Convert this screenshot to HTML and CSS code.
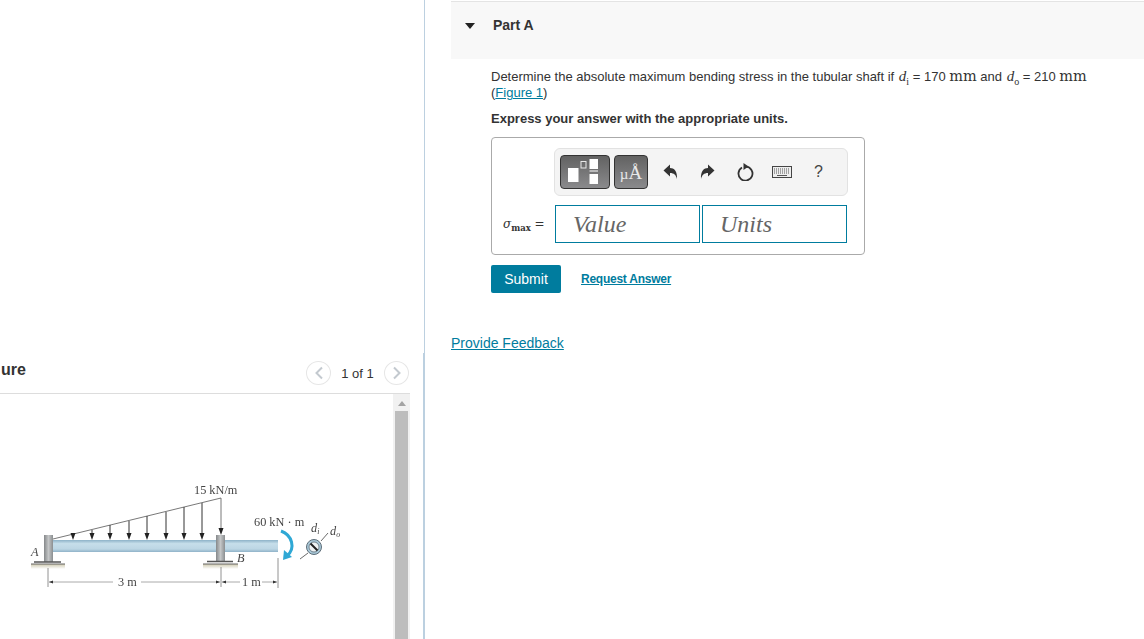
FILE: index.html
```html
<!DOCTYPE html>
<html>
<head>
    <meta charset="UTF-8">
    <title>Part A</title>
    <link rel="stylesheet" href="styles.css">
</head>
<body>
<div class="page">
    <div class="izquierda">
        <div class="panelFigura">
            <div class="cabeceraFigura">
                <span class="tituloFigura">ure</span>
                <div class="paginador">
                    <span class="flecha">
                        <svg width="10" height="14" viewBox="0 0 10 14"><path d="M8 1.5 2.5 7 8 12.5" fill="none" stroke="#c3c9cf" stroke-width="2"/></svg>
                    </span>
                    <span class="cuenta">1 of 1</span>
                    <span class="flecha">
                        <svg width="10" height="14" viewBox="0 0 10 14"><path d="M2 1.5 7.5 7 2 12.5" fill="none" stroke="#c3c9cf" stroke-width="2"/></svg>
                    </span>
                </div>
            </div>
            <div class="cuerpoFigura">
                <!-- viewBox uses the y of the page so the drawing can be read against the screenshot -->
                <svg class="figura" width="393" height="245" viewBox="0 394 393 245">
                    <defs>
                        <linearGradient id="barra" x1="0" y1="0" x2="0" y2="1">
                            <stop offset="0" stop-color="#8db2c8"/>
                            <stop offset="0.3" stop-color="#c6deea"/>
                            <stop offset="0.75" stop-color="#bcd6e4"/>
                            <stop offset="1" stop-color="#8fb2c8"/>
                        </linearGradient>
                        <linearGradient id="apoyo" x1="0" y1="0" x2="1" y2="0">
                            <stop offset="0" stop-color="#85888a"/>
                            <stop offset="0.5" stop-color="#c4c6c7"/>
                            <stop offset="1" stop-color="#8b8e90"/>
                        </linearGradient>
                        <linearGradient id="suelo" x1="0" y1="0" x2="0" y2="1">
                            <stop offset="0" stop-color="#cdc8ae"/>
                            <stop offset="1" stop-color="#ffffff"/>
                        </linearGradient>
                    </defs>

                    <rect x="31" y="564" width="34" height="5" fill="url(#suelo)"/>
                    <rect x="203" y="564" width="35" height="5" fill="url(#suelo)"/>
                    <rect x="52" y="540" width="226" height="12" fill="url(#barra)"/>

                    <rect x="44" y="535" width="9" height="27" fill="url(#apoyo)"/>
                    <rect x="216" y="535" width="9" height="26" fill="url(#apoyo)"/>
                    <path d="M34 562H61M207 561.5H233" stroke="#555" stroke-width="1.5"/>
                    <path d="M31 564H65M203 564H238" stroke="#666" stroke-width="1"/>

                    <path d="M53 539 221 498V530" fill="none" stroke="#555" stroke-width="0.8"/>
                    <path class="lineaCarga" d="M92 530V535M110 525V535M129 521V535M147 516V535M166 512V535M184 507V535M202 503V535"/>
                    <path fill="#222" d="M70.5 533h5l-2.500 7zM89.5 533h5l-2.500 7zM107.5 533h5l-2.500 7zM126.5 533h5l-2.500 7zM144.5 533h5l-2.500 7zM163.5 533h5l-2.500 7zM181.5 533h5l-2.500 7zM199.5 533h5l-2.500 7zM218.5 528h5l-2.500 7z"/>

                    <path class="cota" d="M48 568V587M221 567V587M278 558V588"/>
                    <path class="cotaLinea" d="M49 582H113M141 582H220M222 582H240M262 582H277"/>
                    <path fill="#333" d="M49 582l4-1.500v3zM220 582l-4-1.500v3zM222 582l4-1.500v3zM277 582l-4-1.500v3z"/>

                    <path d="M281 531C292 535 296 548 287 556" fill="none" stroke="#2fa8d5" stroke-width="3"/>
                    <path d="M283 560 284 550 292 557z" fill="#2fa8d5"/>

                    <circle cx="314" cy="547" r="7.5" fill="#a9c8d8" stroke="#5d6d78" stroke-width="1"/>
                    <circle cx="314" cy="547" r="5" fill="#eef2f4" stroke="#5d6d78" stroke-width="0.8"/>
                    <path d="M310.5 543.5 317.5 550.5" stroke="#222" stroke-width="2"/>
                    <path d="M300 559 308 553M321 541 328 533" stroke="#444" stroke-width="0.8"/>

                    <text class="tx" x="194" y="494">15 kN/m</text>
                    <text class="tx" x="254" y="526">60 kN · m</text>
                    <text class="tx" x="118" y="586">3 m</text>
                    <text class="tx" x="242" y="586">1 m</text>
                    <text class="tx cursiva" x="31" y="556">A</text>
                    <text class="tx cursiva" x="237" y="562">B</text>
                    <text class="tx cursiva" x="311" y="532">d<tspan class="sub" dy="2">i</tspan></text>
                    <text class="tx cursiva" x="330" y="535">d<tspan class="sub" dy="2">o</tspan></text>
                </svg>
                <div class="barraScroll">
                    <span class="scrollArriba"></span>
                    <span class="scrollPulgar"></span>
                </div>
            </div>
        </div>
    </div>

    <div class="derecha">
        <div class="parte">
            <span class="triangulo"></span>
            <span class="tituloParte">Part A</span>
        </div>
        <div class="contenido">
            <p class="enunciado">Determine the absolute maximum bending stress in the tubular shaft if <i class="letra">d</i><sub class="indice">i</sub> = 170 <span class="unidad">mm</span> and <i class="letra">d</i><sub class="indice">o</sub> = 210 <span class="unidad">mm</span><br>(<a href="#">Figure 1</a>)</p>
            <p class="instruccion">Express your answer with the appropriate units.</p>
            <div class="caja">
                <div class="herramientas">
                    <span class="botonOscuro botonPlantilla">
                        <svg width="48" height="32" viewBox="0 0 48 32">
                            <rect x="7" y="12" width="10.5" height="14" fill="#fff"/>
                            <rect x="20" y="5.5" width="5" height="6.5" fill="none" stroke="#e8e8e8" stroke-width="1"/>
                            <rect x="28.5" y="3" width="8.5" height="10" fill="#fff"/>
                            <rect x="28.5" y="14.5" width="8.5" height="1" fill="#fff"/>
                            <rect x="28.5" y="18" width="8.5" height="10" fill="#fff"/>
                        </svg>
                    </span>
                    <span class="botonOscuro botonUnidades"><span class="micro">µ</span>Å</span>
                    <span class="hueco">
                        <svg width="15" height="16" viewBox="0 0 15 16"><path d="M0.5 6.5 7 0.5V4C11 4 14.5 7 14 15 13 11 11 9 7 9V12.5z" fill="#333"/></svg>
                    </span>
                    <span class="hueco">
                        <svg width="15" height="16" viewBox="0 0 15 16"><path d="M14.5 6.5 8 0.5V4C4 4 0.5 7 1 15 2 11 4 9 8 9V12.5z" fill="#333"/></svg>
                    </span>
                    <span class="hueco">
                        <svg width="18" height="18" viewBox="0 0 18 18"><path d="M6 4.5A7 7 0 1 0 10 3.6" fill="none" stroke="#333" stroke-width="1.8"/><path d="M7.5 0 12.5 3.500 7.500 7z" fill="#333"/></svg>
                    </span>
                    <span class="hueco">
                        <svg width="20" height="12" viewBox="0 0 20 12">
                            <rect x="0.5" y="0.5" width="19" height="11" fill="#eee" stroke="#444"/>
                            <path d="M2 3H18M2 5H18M2 7H18" stroke="#555" stroke-dasharray="1 1"/>
                            <path d="M5 9.5H15" stroke="#555"/>
                        </svg>
                    </span>
                    <span class="hueco ayuda">?</span>
                </div>
                <div class="filaRespuesta">
                    <span class="sigma"><i>σ</i><sub>max</sub> =</span>
                    <span class="entrada">Value</span>
                    <span class="entrada">Units</span>
                </div>
            </div>
            <div class="acciones">
                <button class="enviar" type="button">Submit</button>
                <a class="pedir" href="#">Request Answer</a>
            </div>
        </div>
        <a class="opinion" href="#">Provide Feedback</a>
    </div>
</div>
</body>
</html>
```

FILE: styles.css
```css
html, body {
    margin: 0;
    height: 100%;
    overflow: hidden;
}

body {
    background-color: white;
    color: #333;
    font-family: "Liberation Sans", Arial, sans-serif;
    font-size: 13px;
}

a {
    color: #007c9e;
}

.page {
    display: flex;
    height: 639px;
}

.izquierda {
    width: 424px;
    flex-shrink: 0;
}

.panelFigura {
    margin-top: 353px;
    height: 286px;
    box-sizing: border-box;
    padding-top: 8px;
    border-right: 1px solid #bcd0e0;
}

.cabeceraFigura {
    width: 410px;
    height: 33px;
    box-sizing: border-box;
    border-bottom: 1px solid #ddd;
    display: flex;
    justify-content: space-between;
    align-items: flex-start;
}

.tituloFigura {
    font-size: 16px;
    font-weight: bold;
    line-height: 18px;
    margin-left: 1px;
}

.paginador {
    display: flex;
    gap: 10px;
    padding-right: 1px;
}

.flecha {
    width: 25px;
    height: 24px;
    box-sizing: border-box;
    border: 1px solid #e6e6e6;
    border-radius: 50%;
    display: flex;
    align-items: center;
    justify-content: center;
}

.cuenta {
    font-size: 13px;
    line-height: 26px;
    width: 33px;
    text-align: center;
    white-space: nowrap;
}

.cuerpoFigura {
    display: flex;
    width: 410px;
}

.figura {
    display: block;
    filter: blur(0.3px);
}

.barraScroll {
    width: 17px;
    background-color: #f1f1f1;
    height: 245px;
    display: flex;
    flex-direction: column;
    align-items: center;
}

.scrollArriba {
    width: 0;
    height: 0;
    border-left: 4px solid transparent;
    border-right: 4px solid transparent;
    border-bottom: 5px solid #a3a3a3;
    margin-top: 7px;
    margin-bottom: 5px;
}

.scrollPulgar {
    width: 13px;
    flex: 1;
    background-color: #bdbdbd;
}

.tx {
    font-family: "Liberation Serif", "Times New Roman", serif;
    font-size: 12.3px;
    fill: #444;
}

.cursiva {
    font-style: italic;
}

.sub {
    font-size: 8px;
}

.lineaCarga {
    fill: none;
    stroke: #333;
    stroke-width: 1;
}

.cota {
    fill: none;
    stroke: #777;
    stroke-width: 0.8;
}

.cotaLinea {
    fill: none;
    stroke: #aaa;
    stroke-width: 1;
}

.derecha {
    flex: 1;
    border-left: 1px solid #bcd0e0;
    padding-left: 26px;
    padding-top: 1px;
}

.parte {
    height: 58px;
    border-top: 1px solid #e4e4e4;
    background-color: #f8f8f8;
    display: flex;
    align-items: flex-start;
    padding-top: 14px;
    box-sizing: border-box;
}

.triangulo {
    width: 0;
    height: 0;
    border-left: 5px solid transparent;
    border-right: 5px solid transparent;
    border-top: 6px solid #222;
    margin-left: 14px;
    margin-top: 7px;
}

.tituloParte {
    font-size: 14px;
    font-weight: bold;
    margin-left: 18px;
    line-height: 18px;
}

.contenido {
    padding-left: 40px;
}

.enunciado {
    margin: 10px 0 0 0;
    line-height: 16px;
}

.letra {
    font-family: "Liberation Serif", serif;
    font-size: 15px;
    line-height: 0;
    margin-left: 1px;
}

.indice {
    font-family: "Liberation Serif", serif;
    font-size: 10px;
    line-height: 0;
}

.unidad {
    font-family: "DejaVu Serif", "Liberation Serif", serif;
    font-size: 14.5px;
    line-height: 0;
}

.instruccion {
    margin: 10px 0 0 0;
    font-weight: bold;
    line-height: 16px;
}

.caja {
    width: 374px;
    height: 118px;
    box-sizing: border-box;
    margin-top: 10px;
    border: 1px solid #aaa;
    border-radius: 4px;
    padding: 10px 16px 0 62px;
}

.herramientas {
    width: 294px;
    height: 48px;
    box-sizing: border-box;
    background-color: #f4f4f4;
    border: 1px solid #e2e2e2;
    border-radius: 6px;
    display: flex;
    align-items: center;
    padding-left: 5px;
}

.botonOscuro {
    height: 34px;
    box-sizing: border-box;
    border: 1px solid #333;
    border-radius: 4px;
    background: linear-gradient(#626262, #8a8a8c);
    display: flex;
    align-items: center;
    justify-content: center;
    color: #e8e8e8;
}

.botonPlantilla {
    width: 50px;
}

.botonUnidades {
    width: 34px;
    margin-left: 4px;
    margin-right: 4px;
    font-family: "Liberation Serif", serif;
    font-size: 19px;
    align-items: baseline;
    line-height: 34px;
}

.micro {
    font-size: 15px;
}

.hueco {
    width: 37px;
    display: flex;
    align-items: center;
    justify-content: center;
}

.ayuda {
    font-size: 16px;
    color: #444;
}

.filaRespuesta {
    display: flex;
    align-items: center;
    margin-top: 9px;
    margin-left: -51px;
}

.sigma {
    width: 52px;
    font-family: "DejaVu Serif", "Liberation Serif", serif;
    font-size: 12px;
    white-space: nowrap;
}

.sigma sub {
    font-size: 8.5px;
    font-weight: bold;
    line-height: 0;
}

.entrada {
    width: 145px;
    height: 38px;
    box-sizing: border-box;
    border: 1px solid #007c9e;
    padding-left: 17px;
    font-family: "Liberation Serif", serif;
    font-style: italic;
    font-size: 24px;
    line-height: 36px;
    color: #666;
}

.entrada + .entrada {
    margin-left: 2px;
}

.acciones {
    display: flex;
    align-items: center;
    margin-top: 10px;
}

.enviar {
    width: 70px;
    height: 28px;
    border: none;
    border-radius: 2px;
    background-color: #007c9e;
    color: white;
    font-family: "Liberation Sans", Arial, sans-serif;
    font-size: 14px;
    padding: 0;
}

.pedir {
    margin-left: 20px;
    font-size: 12px;
    letter-spacing: -0.25px;
    font-weight: bold;
}

.opinion {
    display: inline-block;
    margin-top: 42px;
    font-size: 14px;
}
```
